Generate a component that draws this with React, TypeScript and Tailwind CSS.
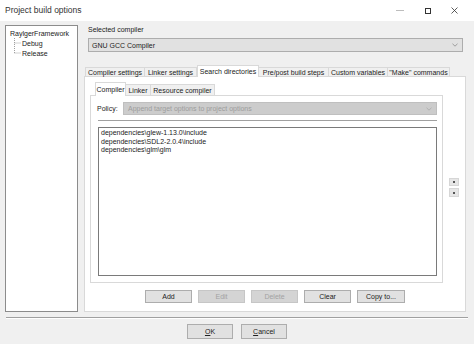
import React from "react";

const tabs = [
  { label: "Compiler settings", cls: "w-[60px]" },
  { label: "Linker settings", cls: "w-[52px]" },
  { label: "Search directories", cls: "w-[62px]", active: true },
  { label: "Pre/post build steps", cls: "w-[70px]" },
  { label: "Custom variables", cls: "w-[59px]" },
  { label: '"Make" commands', cls: "w-[62px]" },
];

const innerTabs = [
  { label: "Compiler", cls: "w-[31px]", active: true },
  { label: "Linker", cls: "w-[25px]" },
  { label: "Resource compiler", cls: "w-[64px]" },
];

function Btn({ label, disabled, cls }: { label: React.ReactNode; disabled?: boolean; cls: string }) {
  return (
    <div
      className={
        "h-[13px] flex items-center justify-center border leading-none " +
        cls +
        (disabled
          ? " bg-[#d4d4d4] border-[#c6c6c6] text-[#a3a3a3]"
          : " bg-[#e1e1e1] border-[#adadad] text-[#222]")
      }
    >
      {label}
    </div>
  );
}

function Chevron({ color }: { color: string }) {
  return (
    <svg width="6" height="4" viewBox="0 0 6 4">
      <path d="M0.5 0.8 L3 3.2 L5.5 0.8" fill="none" stroke={color} strokeWidth="0.8" />
    </svg>
  );
}

export default function App() {
  return (
    <div className="w-[474px] h-[344px] bg-[#f0f0f0] overflow-hidden flex flex-col font-['Liberation_Sans',Arial,sans-serif] text-[7px] text-[#222] select-none">
      {/* Title bar */}
      <div className="h-[21px] bg-white flex items-center shrink-0">
        <span className="pl-[5px] text-[8.5px] text-[#333] leading-none">Project build options</span>
        <div className="ml-auto flex items-center h-full pr-[8px]">
          <div className="w-[28px] flex justify-center">
            <div className="w-[8px] h-px bg-[#bdbdbd]" />
          </div>
          <div className="w-[28px] flex justify-center">
            <div className="w-[6px] h-[6px] border border-[#333]" />
          </div>
          <div className="w-[24px] flex justify-center">
            <svg width="7" height="7" viewBox="0 0 7 7">
              <path d="M0.5 0.5 L6.5 6.5 M6.5 0.5 L0.5 6.5" stroke="#333" strokeWidth="0.8" />
            </svg>
          </div>
        </div>
      </div>

      {/* Body */}
      <div className="flex px-[5px] pt-[4px] shrink-0">
        {/* Tree */}
        <div className="w-[73px] h-[287px] bg-white border border-[#8c8c8c] pt-[2px]">
          <div className="h-[10px] flex items-center pl-[4px] leading-none">RaylgerFramework</div>
          <div className="flex">
            <svg width="16" height="20" viewBox="0 0 16 20" className="shrink-0">
              <path d="M8.5 0 V15 M8.5 5 H15 M8.5 15 H15" stroke="#a0a0a0" strokeWidth="1" strokeDasharray="1 1" fill="none" />
            </svg>
            <div className="flex flex-col">
              <div className="h-[10px] flex items-center leading-none">Debug</div>
              <div className="h-[10px] flex items-center leading-none">Release</div>
            </div>
          </div>
        </div>

        {/* Right panel */}
        <div className="ml-[5px] w-[385px] h-[288px] flex flex-col">
          <div className="h-[13px] pl-[5px] pt-[1px] leading-[8px]">Selected compiler</div>
          <div className="ml-[5px] w-[375px] h-[14px] bg-[#e1e1e1] border border-[#adadad] flex items-center pl-[3px] pr-[4px] leading-none">
            <span>GNU GCC Compiler</span>
            <span className="ml-auto">
              <Chevron color="#8a8a8a" />
            </span>
          </div>

          {/* Tab headers */}
          <div className="mt-[13px] h-[11px] flex items-end pl-[2px] relative z-10">
            {tabs.map((t) =>
              t.active ? (
                <div
                  key={t.label}
                  className={
                    t.cls +
                    " h-[12px] -mb-px bg-white border border-b-0 border-[#d9d9d9] flex items-center justify-center leading-none whitespace-nowrap"
                  }
                >
                  {t.label}
                </div>
              ) : (
                <div
                  key={t.label}
                  className={
                    t.cls +
                    " h-[9px] bg-[#f0f0f0] border border-b-0 border-l-0 first:border-l border-[#d9d9d9] flex items-center justify-center leading-none whitespace-nowrap"
                  }
                >
                  {t.label}
                </div>
              )
            )}
          </div>

          {/* Tab page */}
          <div className="ml-[1px] w-[382px] h-[236px] bg-white border border-[#d9d9d9] flex flex-col">
            <div className="flex pl-[5px] pt-[5px]">
              {/* Inner tab control */}
              <div className="flex flex-col w-[353px]">
                <div className="h-[13px] flex items-end pl-[5px] relative z-10">
                  {innerTabs.map((t) =>
                    t.active ? (
                      <div
                        key={t.label}
                        className={
                          t.cls +
                          " h-[14px] -mb-px bg-white border border-b-0 border-[#d9d9d9] flex items-center justify-center leading-none whitespace-nowrap"
                        }
                      >
                        {t.label}
                      </div>
                    ) : (
                      <div
                        key={t.label}
                        className={
                          t.cls +
                          " h-[11px] bg-[#f0f0f0] border border-b-0 border-l-0 border-[#d9d9d9] flex items-center justify-center leading-none whitespace-nowrap"
                        }
                      >
                        {t.label}
                      </div>
                    )
                  )}
                </div>
                <div className="h-[188px] bg-white border border-[#d9d9d9] flex flex-col">
                  <div className="mt-[6px] flex items-center h-[13px] pl-[6px]">
                    <div className="w-[26px] leading-none">Policy:</div>
                    <div className="w-[314px] h-[13px] bg-[#cccccc] border border-[#bfbfbf] flex items-center pl-[4px] pr-[4px] leading-none text-[#9c9c9c]">
                      <span>Append target options to project options</span>
                      <span className="ml-auto">
                        <Chevron color="#a8a8a8" />
                      </span>
                    </div>
                  </div>
                  <div className="mt-[5px] ml-[7px] w-[339px] h-px bg-[#a0a0a0]" />
                  <div className="mt-[6px] ml-[7px] w-[339px] h-[149px] border border-[#7a7a7a] bg-white pl-[2px] pt-[1px] leading-[8.5px]">
                    <div>dependencies\glew-1.13.0\include</div>
                    <div>dependencies\SDL2-2.0.4\include</div>
                    <div>dependencies\glm\glm</div>
                  </div>
                </div>
              </div>
              {/* Up/down */}
              <div className="ml-[6px] mt-[96px] flex flex-col gap-[2px]">
                <div className="w-[10px] h-[8px] bg-[#e6e6e6] border border-[#d6d6d6] flex items-center justify-center">
                  <div className="w-[2px] h-[2px] bg-[#555]" />
                </div>
                <div className="w-[10px] h-[9px] bg-[#e6e6e6] border border-[#d6d6d6] flex items-center justify-center">
                  <div className="w-[2px] h-[2px] bg-[#555]" />
                </div>
              </div>
            </div>
            <div className="mt-[7px] flex justify-center gap-[6px]">
              <Btn label="Add" cls="w-[47px]" />
              <Btn label="Edit" cls="w-[47px]" disabled />
              <Btn label="Delete" cls="w-[47px]" disabled />
              <Btn label="Clear" cls="w-[47px]" />
              <Btn label="Copy to..." cls="w-[48px]" />
            </div>
          </div>
        </div>
      </div>

      {/* Bottom separator */}
      <div className="mt-[4px] mx-[6px] h-px bg-[#a0a0a0]" />
      <div className="mx-[6px] h-px bg-white" />

      {/* OK / Cancel */}
      <div className="mt-[5px] flex justify-center gap-[8px]">
        <div className="w-[46px] h-[15px] bg-[#e1e1e1] border border-[#adadad] flex items-center justify-center leading-none">
          <span>
            <span className="underline">O</span>K
          </span>
        </div>
        <div className="w-[46px] h-[15px] bg-[#e1e1e1] border border-[#adadad] flex items-center justify-center leading-none">
          <span>
            <span className="underline">C</span>ancel
          </span>
        </div>
      </div>
    </div>
  );
}
